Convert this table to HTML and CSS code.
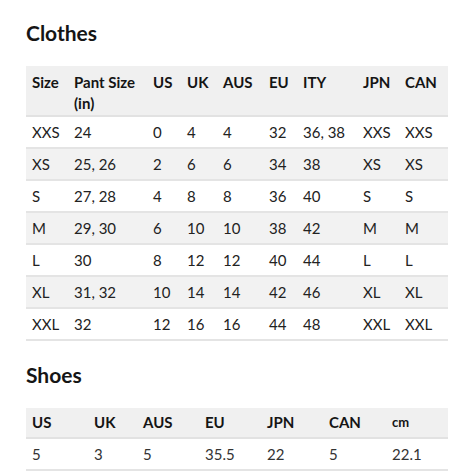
FILE: index.html
```html
<!DOCTYPE html>
<html>
<head>
<meta charset="utf-8">
<link rel="stylesheet" href="styles.css">
</head>
<body>
<div class="page">
  <h2 class="title">Clothes</h2>
  <div class="chart clothes" role="table">
    <div class="row head two" role="row"><span>Size</span><span>Pant Size<br>(in)</span><span>US</span><span>UK</span><span>AUS</span><span>EU</span><span>ITY</span><span>JPN</span><span>CAN</span></div>
    <div class="row" role="row"><span>XXS</span><span>24</span><span>0</span><span>4</span><span>4</span><span>32</span><span>36, 38</span><span>XXS</span><span>XXS</span></div>
    <div class="row alt" role="row"><span>XS</span><span>25, 26</span><span>2</span><span>6</span><span>6</span><span>34</span><span>38</span><span>XS</span><span>XS</span></div>
    <div class="row" role="row"><span>S</span><span>27, 28</span><span>4</span><span>8</span><span>8</span><span>36</span><span>40</span><span>S</span><span>S</span></div>
    <div class="row alt" role="row"><span>M</span><span>29, 30</span><span>6</span><span>10</span><span>10</span><span>38</span><span>42</span><span>M</span><span>M</span></div>
    <div class="row" role="row"><span>L</span><span>30</span><span>8</span><span>12</span><span>12</span><span>40</span><span>44</span><span>L</span><span>L</span></div>
    <div class="row alt" role="row"><span>XL</span><span>31, 32</span><span>10</span><span>14</span><span>14</span><span>42</span><span>46</span><span>XL</span><span>XL</span></div>
    <div class="row" role="row"><span>XXL</span><span>32</span><span>12</span><span>16</span><span>16</span><span>44</span><span>48</span><span>XXL</span><span>XXL</span></div>
  </div>

  <h2 class="title">Shoes</h2>
  <div class="chart shoes" role="table">
    <div class="row head" role="row"><span>US</span><span>UK</span><span>AUS</span><span>EU</span><span>JPN</span><span>CAN</span><span class="small">cm</span></div>
    <div class="row plain" role="row"><span>5</span><span>3</span><span>5</span><span>35.5</span><span>22</span><span>5</span><span>22.1</span></div>
  </div>
</div>
</body>
</html>
```
FILE: styles.css
```css
html, body {
  margin: 0;
  padding: 0;
  background: #ffffff;
}
.page {
  padding: 20px 0 0 26px;
  font-family: Lato, "Open Sans", sans-serif;
  color: #222222;
}
.title {
  margin: 0 0 20px 0;
  font-size: 21px;
  line-height: 26px;
  font-weight: 700;
  color: #151515;
}
.chart {
  width: 422px;
  margin-bottom: 21px;
}
.row {
  display: grid;
  height: 30px;
  align-items: center;
  border-bottom: 2px solid #e4e4e4;
  font-size: 15px;
  line-height: 18px;
  white-space: nowrap;
}
.clothes .row {
  grid-template-columns: 42px 79px 34px 36px 46px 34px 60px 42px 49px;
}
.shoes .row {
  grid-template-columns: 62px 49px 62px 62px 62px 63px 62px;
}
.row > span {
  padding-left: 6px;
}
.row.alt {
  background: #f2f2f2;
}
.row.plain {
  color: #333333;
}
.row.head {
  background: #f0f0f0;
  border-bottom-color: #e2e2e2;
  font-weight: 700;
  line-height: 21px;
  height: 29px;
  color: #151515;
}
.row.head.two {
  height: 49px;
  align-items: start;
}
.row.head.two > span {
  padding-top: 6px;
}
.row.head .small {
  font-size: 13px;
}
```
